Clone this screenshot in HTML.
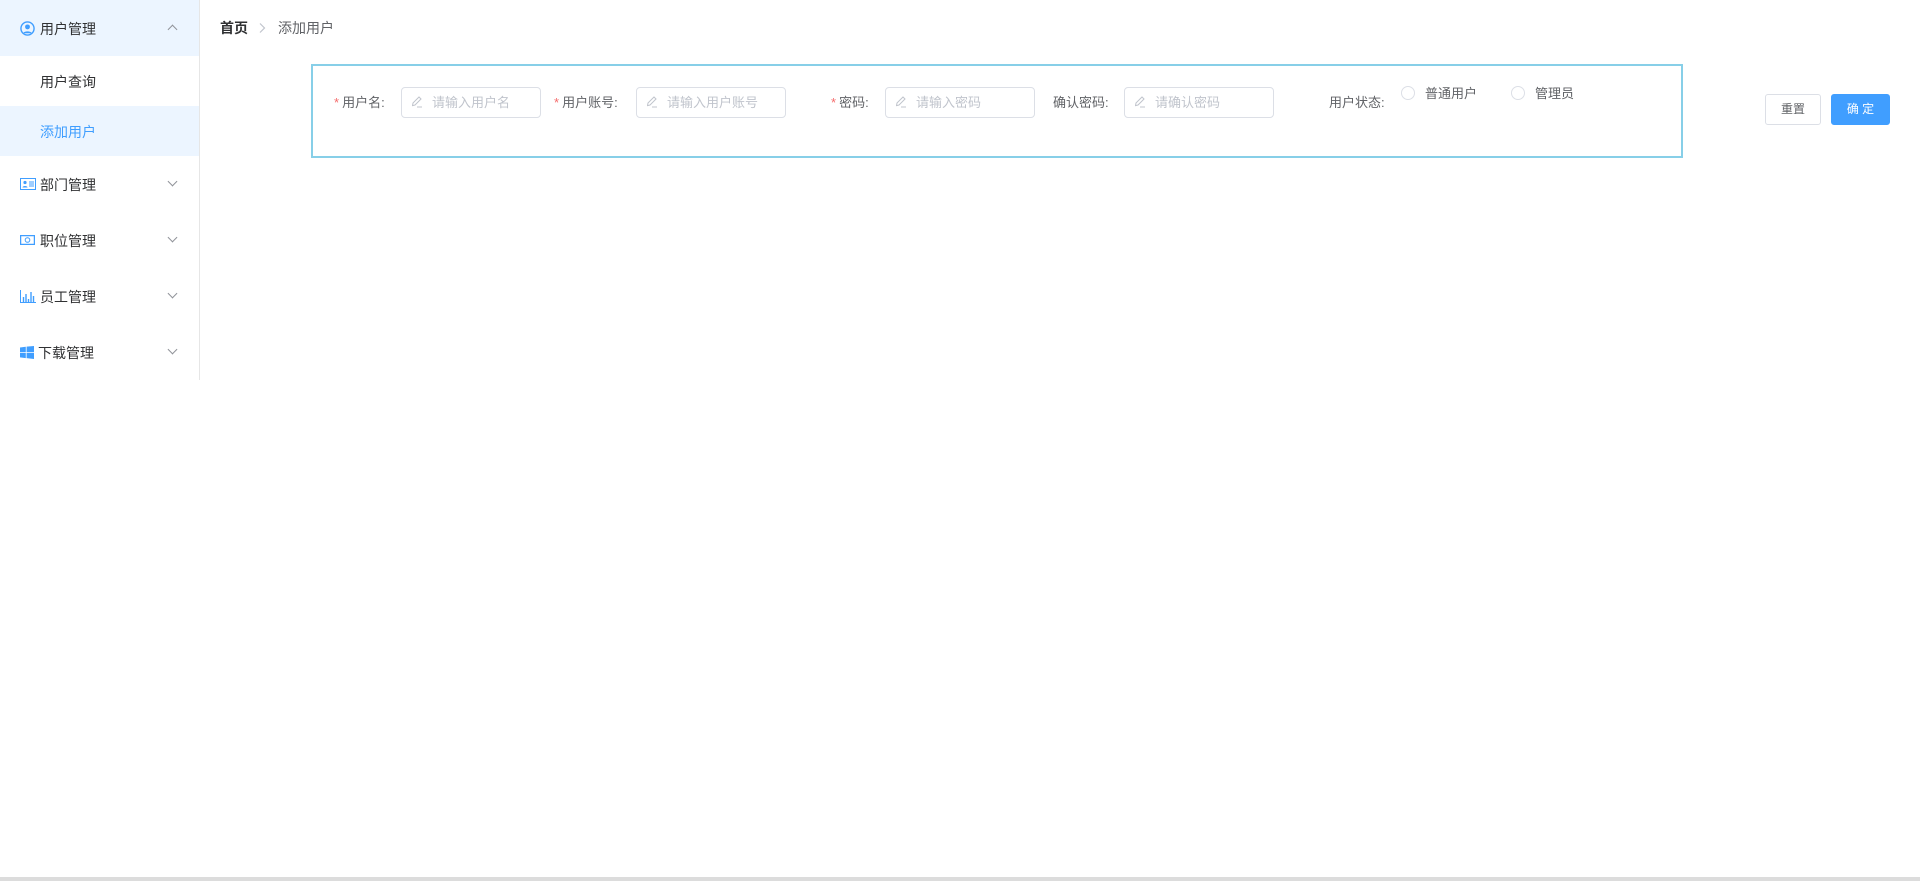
<!DOCTYPE html>
<html><head><meta charset="utf-8"><style>
*{margin:0;padding:0;box-sizing:border-box}
body{width:1920px;height:881px;background:#fff;font-family:"Liberation Sans","Noto Sans CJK SC",sans-serif;color:#303133;position:relative;overflow:hidden;font-size:14px}
.side{position:absolute;left:0;top:0;width:200px;height:380px;border-right:1px solid #e6e6e6}
.row{position:absolute;left:0;width:199px;display:flex;align-items:center}
.row .t{position:absolute;left:40px;top:50%;transform:translateY(-45%)}
.arr{position:absolute;left:169px;width:7px;height:7px;border-right:1px solid #909399;border-bottom:1px solid #909399}
.ico{position:absolute;left:20px}
.abs{position:absolute}
.lbl{position:absolute;font-size:13px;color:#606266;top:92px}
.lbl .s{color:#f56c6c;margin-right:3px}
.inp{position:absolute;top:87px;height:31px;border:1px solid #dcdfe6;border-radius:4px;font-size:13px;color:#c0c4cc;padding-left:30px;line-height:29px}
.inp svg{position:absolute;left:10px;top:8px}
.radio{position:absolute;top:86px;width:14px;height:14px;border:1px solid #dcdfe6;border-radius:50%}
.btn{position:absolute;top:94px;height:31px;border-radius:3px;font-size:12px;text-align:center;line-height:29px}
</style></head><body>
<div class="side">
 <div class="row" style="top:0;height:56px;background:#ecf5ff">
  <svg class="ico" width="15" height="15" viewBox="0 0 16 16"><circle cx="8" cy="8" r="7" fill="none" stroke="#409eff" stroke-width="1.5"/><circle cx="8" cy="6.3" r="2.6" fill="#409eff"/><path d="M3.5 13c1-2.5 8-2.5 9 0" fill="#409eff"/></svg>
  <span class="t">用户管理</span><div class="arr" style="top:26px;transform:rotate(-135deg)"></div></div>
 <div class="row" style="top:56px;height:50px"><span class="t">用户查询</span></div>
 <div class="row" style="top:106px;height:50px;background:#ecf5ff;color:#409eff"><span class="t">添加用户</span></div>
 <div class="row" style="top:156px;height:56px">
  <svg class="ico" width="16" height="12" viewBox="0 0 16 12"><rect x=".5" y=".5" width="15" height="11" fill="none" stroke="#409eff"/><circle cx="5" cy="4.5" r="1.6" fill="#409eff"/><path d="M2.5 9.5h5c0-2-5-2-5 0z" fill="#409eff"/><path d="M9 4h5M9 6h5M9 8h5" stroke="#409eff"/></svg>
  <span class="t">部门管理</span><div class="arr" style="top:22px;transform:rotate(45deg)"></div></div>
 <div class="row" style="top:212px;height:56px">
  <svg class="ico" width="15" height="10" viewBox="0 0 15 10"><rect x=".5" y=".5" width="14" height="9" fill="none" stroke="#409eff" stroke-width="1.5"/><circle cx="7.5" cy="5" r="2.3" fill="none" stroke="#409eff"/></svg>
  <span class="t">职位管理</span><div class="arr" style="top:22px;transform:rotate(45deg)"></div></div>
 <div class="row" style="top:268px;height:56px">
  <svg class="ico" width="16" height="13" viewBox="0 0 16 13"><path d="M.5 0v12.5H16" fill="none" stroke="#409eff"/><path d="M3.5 7v5M6 4v8M8.5 9v3M11 2v10M13.5 6v6" stroke="#409eff" stroke-width="1.4"/></svg>
  <span class="t">员工管理</span><div class="arr" style="top:22px;transform:rotate(45deg)"></div></div>
 <div class="row" style="top:324px;height:56px">
  <svg class="ico" width="14" height="13" viewBox="0 0 14 13"><path d="M0 1.5l5.8-.8v5.3H0zM6.6.6L14 0v6H6.6zM0 6.8h5.8v5.3L0 11.4zM6.6 6.8H14V13l-7.4-.9z" fill="#409eff"/></svg>
  <span class="t" style="left:38px">下载管理</span><div class="arr" style="top:22px;transform:rotate(45deg)"></div></div>
</div>
<div class="abs" style="left:220px;top:18px;font-size:14px"><b style="font-weight:bold">首页</b><svg width="30" height="12" viewBox="0 0 30 12" style="vertical-align:-1px"><path d="M12 1.5l4.5 4.5-4.5 4.5" fill="none" stroke="#c0c4cc" stroke-width="1.2"/></svg><span style="color:#606266">添加用户</span></div>
<div class="abs" style="left:311px;top:64px;width:1372px;height:94px;border:2px solid #87cfe8"></div>
<div class="lbl" style="left:334px"><span class="s">*</span>用户名:</div>
<div class="inp" style="left:401px;width:140px"><svg width="11" height="12" viewBox="0 0 11 12"><path d="M7 1l2 2-6 6-2.5.6.5-2.6zM5 11h5" fill="none" stroke="#c0c4cc"/></svg>请输入用户名</div>
<div class="lbl" style="left:554px"><span class="s">*</span>用户账号:</div>
<div class="inp" style="left:636px;width:150px"><svg width="11" height="12" viewBox="0 0 11 12"><path d="M7 1l2 2-6 6-2.5.6.5-2.6zM5 11h5" fill="none" stroke="#c0c4cc"/></svg>请输入用户账号</div>
<div class="lbl" style="left:831px"><span class="s">*</span>密码:</div>
<div class="inp" style="left:885px;width:150px"><svg width="11" height="12" viewBox="0 0 11 12"><path d="M7 1l2 2-6 6-2.5.6.5-2.6zM5 11h5" fill="none" stroke="#c0c4cc"/></svg>请输入密码</div>
<div class="lbl" style="left:1053px">确认密码:</div>
<div class="inp" style="left:1124px;width:150px"><svg width="11" height="12" viewBox="0 0 11 12"><path d="M7 1l2 2-6 6-2.5.6.5-2.6zM5 11h5" fill="none" stroke="#c0c4cc"/></svg>请确认密码</div>
<div class="lbl" style="left:1329px">用户状态:</div>
<div class="radio" style="left:1401px"></div><div class="lbl" style="left:1425px;top:83px">普通用户</div>
<div class="radio" style="left:1511px"></div><div class="lbl" style="left:1535px;top:83px">管理员</div>
<div class="btn" style="left:1765px;width:56px;border:1px solid #dcdfe6;color:#606266">重置</div>
<div class="btn" style="left:1831px;width:59px;background:#409eff;color:#fff;border:1px solid #409eff">确 定</div>
<div class="abs" style="left:0;top:877px;width:1920px;height:4px;background:#dcdcdc"></div>
</body></html>
